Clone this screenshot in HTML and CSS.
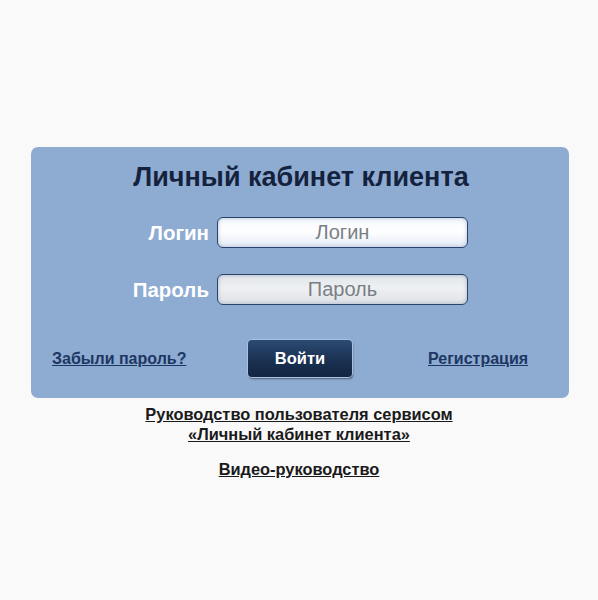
FILE: index.html
```html
<!DOCTYPE html>
<html lang="ru">
<head>
<meta charset="utf-8">
<title>Личный кабинет клиента</title>
<link rel="stylesheet" href="styles.css">
</head>
<body>
<div class="page">
  <div class="panel">
    <h1 class="title">Личный кабинет клиента</h1>
    <div class="form">
      <div class="row">
        <label class="label">Логин</label>
        <div class="input input-login">Логин</div>
      </div>
      <div class="row">
        <label class="label">Пароль</label>
        <div class="input input-pass">Пароль</div>
      </div>
    </div>
    <div class="actions">
      <a class="panel-link forgot" href="#">Забыли пароль?</a>
      <a class="btn" href="#">Войти</a>
      <a class="panel-link reg" href="#">Регистрация</a>
    </div>
  </div>
  <div class="help">
    <a class="help-link" href="#">Руководство пользователя сервисом<br>«Личный кабинет клиента»</a>
    <a class="help-link video" href="#">Видео-руководство</a>
  </div>
</div>
</body>
</html>
```
FILE: styles.css
```css
html, body {
  margin: 0;
  padding: 0;
  background: #f9f9f9;
  font-family: "Liberation Sans", Arial, sans-serif;
}
.page {
  width: 598px;
  height: 600px;
  padding-top: 147px;
  box-sizing: border-box;
}
.panel {
  margin-left: 31px;
  width: 538px;
  height: 251px;
  box-sizing: border-box;
  background: #8eabd2;
  border-radius: 7px;
  padding-top: 15px;
}
.title {
  margin: 0;
  text-align: center;
  font-size: 27px;
  line-height: 30px;
  font-weight: bold;
  color: #15223d;
  padding-left: 2px;
}
.form {
  margin-top: 25px;
  display: flex;
  flex-direction: column;
  gap: 26px;
}
.row {
  display: flex;
  align-items: center;
  height: 31px;
}
.label {
  width: 178px;
  text-align: right;
  font-size: 20.5px;
  font-weight: bold;
  color: #ffffff;
  margin-right: 8px;
}
.input {
  width: 251px;
  height: 31px;
  box-sizing: border-box;
  border: 1.5px solid #2a436a;
  border-radius: 6px;
  text-align: center;
  font-size: 20px;
  line-height: 28px;
  color: #7a7e86;
  box-shadow: inset 0 0 4px rgba(60, 90, 140, 0.35);
}
.input-login {
  background: linear-gradient(#f4f8fd, #ffffff 45%, #e4ecf6);
}
.input-pass {
  background: linear-gradient(#e2e6ea, #eef0f2 45%, #dfe3e7);
}
.actions {
  margin-top: 35px;
  display: flex;
  align-items: center;
  height: 37px;
}
.panel-link {
  font-size: 16px;
  font-weight: bold;
  color: #1d3763;
  text-decoration: underline;
}
.forgot {
  margin-left: 21px;
  width: 196px;
}
.btn {
  width: 104px;
  height: 37px;
  box-sizing: border-box;
  border-radius: 4px;
  background: linear-gradient(#2c4a72, #1a3152 55%, #132642);
  box-shadow: 0 0 0 1px #a9c0de, 1px 2px 2px rgba(0, 0, 0, 0.45);
  color: #ffffff;
  font-size: 16.5px;
  font-weight: bold;
  text-align: center;
  line-height: 37px;
  text-decoration: none;
}
.reg {
  margin-left: 76px;
}
.help {
  margin-top: 6px;
  display: flex;
  flex-direction: column;
  align-items: center;
  gap: 15px;
}
.help-link {
  text-align: center;
  font-size: 16.4px;
  line-height: 20px;
  font-weight: bold;
  color: #1a1a1a;
  text-decoration: underline;
}
```
